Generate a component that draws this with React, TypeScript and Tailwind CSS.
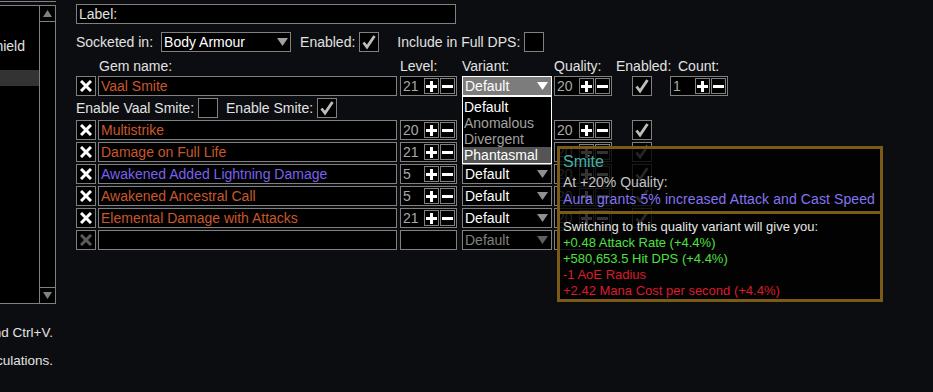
import React from 'react';

const ORANGE = 'text-[#c8582c]';
const PURPLE = 'text-[#7a60f0]';

function Tri({ color = '#a0a0a0', w = 11, h = 8 }: { color?: string; w?: number; h?: number }) {
  return (
    <svg width={w} height={h} viewBox={`0 0 ${w} ${h}`} className="shrink-0">
      <polygon points={`0,0 ${w},0 ${w / 2},${h}`} fill={color} />
    </svg>
  );
}

function Check() {
  return (
    <svg width="18" height="18" viewBox="0 0 18 18">
      <polyline points="3.5,9.5 7,14 14.5,3" fill="none" stroke="#bdbdbd" strokeWidth="2.8" strokeLinejoin="miter" />
    </svg>
  );
}

function CheckBox({ checked }: { checked?: boolean }) {
  return (
    <div className="w-[20px] h-[20px] shrink-0 border border-[#808080] bg-black flex items-center justify-center">
      {checked && <Check />}
    </div>
  );
}

function XButton({ disabled }: { disabled?: boolean }) {
  const c = disabled ? '#5c5c5c' : '#ffffff';
  return (
    <div className="w-[20px] h-[20px] shrink-0 border border-[#808080] bg-black flex items-center justify-center">
      <svg width="12" height="12" viewBox="0 0 12 12">
        <line x1="1" y1="1" x2="11" y2="11" stroke={c} strokeWidth="3" />
        <line x1="11" y1="1" x2="1" y2="11" stroke={c} strokeWidth="3" />
      </svg>
    </div>
  );
}

function PlusMinus() {
  return (
    <div className="flex gap-px">
      <div className="w-[15px] h-[16px] border border-[#808080] flex items-center justify-center">
        <svg width="11" height="11" viewBox="0 0 11 11">
          <rect x="0" y="4" width="11" height="3" fill="#fff" />
          <rect x="4" y="0" width="3" height="11" fill="#fff" />
        </svg>
      </div>
      <div className="w-[15px] h-[16px] border border-[#808080] flex items-center justify-center">
        <svg width="11" height="11" viewBox="0 0 11 11">
          <rect x="0" y="4" width="11" height="3" fill="#fff" />
        </svg>
      </div>
    </div>
  );
}

function Spinner({ value, width, empty }: { value?: string; width: string; empty?: boolean }) {
  return (
    <div className={`${width} h-[20px] shrink-0 border border-[#808080] bg-black flex items-center justify-between pl-[2px] pr-px`}>
      <span className="text-[#a8a8a8]">{value}</span>
      {!empty && <PlusMinus />}
    </div>
  );
}

function VariantSelect({ active, disabled }: { active?: boolean; disabled?: boolean }) {
  if (active) {
    return (
      <div className="relative w-[90px] h-[20px] shrink-0">
        <div className="w-full h-full border border-white bg-[#7c7c7c] flex items-center justify-between pl-[2px] pr-[3px]">
          <span className="text-white">Default</span>
          <Tri color="#ffffff" />
        </div>
        {/* open dropdown list */}
        <div className="absolute left-0 top-[20px] w-[90px] h-[68px] border border-white bg-black z-10 pt-[2px]">
          <div className="h-[16px] leading-[16px] px-px text-white">Default</div>
          <div className="h-[16px] leading-[16px] px-px text-[#a0a0a0]">Anomalous</div>
          <div className="h-[16px] leading-[16px] px-px text-[#a0a0a0]">Divergent</div>
          <div className="h-[16px] leading-[16px] px-px text-white bg-[#555555]">Phantasmal</div>
        </div>
      </div>
    );
  }
  return (
    <div className="w-[90px] h-[20px] shrink-0 border border-[#808080] bg-black flex items-center justify-between pl-[2px] pr-[3px]">
      <span className={disabled ? 'text-[#808080]' : 'text-white'}>Default</span>
      <Tri color={disabled ? '#606060' : '#909090'} />
    </div>
  );
}

type Gem = { name: string; color: string; level: string; quality: string; count?: string; active?: boolean };

const gems: Gem[] = [
  { name: 'Vaal Smite', color: ORANGE, level: '21', quality: '20', count: '1', active: true },
  { name: 'Multistrike', color: ORANGE, level: '20', quality: '20' },
  { name: 'Damage on Full Life', color: ORANGE, level: '21', quality: '20' },
  { name: 'Awakened Added Lightning Damage', color: PURPLE, level: '5', quality: '20' },
  { name: 'Awakened Ancestral Call', color: ORANGE, level: '5', quality: '20' },
  { name: 'Elemental Damage with Attacks', color: ORANGE, level: '21', quality: '20' },
];

function GemRow({ gem }: { gem: Gem }) {
  return (
    <div className="flex items-center h-[20px]">
      <XButton />
      <div className={`ml-[2px] w-[299px] h-[20px] border border-[#808080] bg-black flex items-center pl-[2px] ${gem.color}`}>
        {gem.name}
      </div>
      <div className="ml-[3px]">
        <Spinner value={gem.level} width="w-[57px]" />
      </div>
      <div className="ml-[5px]">
        <VariantSelect active={gem.active} />
      </div>
      <div className="ml-[2px]">
        <Spinner value={gem.quality} width="w-[58px]" />
      </div>
      <div className="ml-[20px]">
        <CheckBox checked />
      </div>
      {gem.count && (
        <div className="ml-[18px]">
          <Spinner value={gem.count} width="w-[58px]" />
        </div>
      )}
    </div>
  );
}

function Tooltip() {
  return (
    <div className="absolute left-[557px] top-[146px] w-[326px] border-[3px] border-[#7a5a14] bg-black/80 z-20">
      <div className="h-[62px] pl-[3px] pt-[3px]">
        <div className="text-[16px] leading-[20px] text-[#45b0a2]">Smite</div>
        <div className="mt-px leading-[18px] text-[#c4c4c4]">At +20% Quality:</div>
        <div className="leading-[16px] tracking-[0.1px] text-[#8274f2]">Aura grants 5% increased Attack and Cast Speed</div>
      </div>
      <div className="h-[3px] bg-[#7a5a14]" />
      <div className="h-[85px] pl-[3px] pt-[5px] text-[13px] leading-[16px]">
        <div className="text-[#e6e6e6]">Switching to this quality variant will give you:</div>
        <div className="text-[#4ee040]">+0.48 Attack Rate (+4.4%)</div>
        <div className="text-[#4ee040]">+580,653.5 Hit DPS (+4.4%)</div>
        <div className="text-[#dd1a2a]">-1 AoE Radius</div>
        <div className="text-[#dd1a2a]">+2.42 Mana Cost per second (+4.4%)</div>
      </div>
    </div>
  );
}

export default function App() {
  return (
    <div className="relative w-[933px] h-[392px] overflow-hidden bg-[#0c0d10] flex font-['Liberation_Sans',Arial,sans-serif] text-[14px] text-[#e2e2e2]">
      {/* left panel: gem group list, cut off on the left */}
      <div className="w-[56px] shrink-0 flex flex-col">
        <div className="mt-px h-px bg-[#808080]" />
        <div className="mt-[3px] h-[299px] border-y border-r border-[#808080] bg-black flex">
          <div className="w-[39px] shrink-0 overflow-hidden">
            <div className="h-[16px]" />
            <div className="h-[16px]" />
            <div className="h-[16px] leading-[16px] flex justify-end whitespace-nowrap pr-[14px]">Energy Shield</div>
            <div className="h-[16px]" />
            <div className="h-[16px] bg-[#333333]" />
          </div>
          <div className="w-[16px] border-l border-[#808080] flex flex-col justify-between">
            <div className="h-[16px] border-b border-[#808080] flex items-center justify-center">
              <svg width="9" height="7" viewBox="0 0 9 7"><polygon points="0,7 9,7 4.5,0" fill="#808080" /></svg>
            </div>
            <div className="h-[16px] border-t border-[#808080] flex items-center justify-center">
              <Tri color="#808080" w={9} h={7} />
            </div>
          </div>
        </div>
        <div className="mt-[21px] h-[16px] leading-[16px] text-[13.5px] flex justify-end whitespace-nowrap overflow-hidden pr-[3px]">
          Gems can be copied and pasted with Ctrl+C and Ctrl+V.
        </div>
        <div className="mt-[12px] h-[16px] leading-[16px] text-[13.5px] flex justify-end whitespace-nowrap overflow-hidden pr-[3px]">
          Disabled gems will not be used in calculations.
        </div>
      </div>

      {/* main socket group editor */}
      <div className="ml-[20px] flex flex-col">
        <div className="mt-[4px] w-[380px] h-[20px] border border-[#808080] bg-black flex items-center pl-[2px]">Label:</div>

        <div className="mt-[8px] h-[20px] flex items-center">
          <span>Socketed in:</span>
          <div className="ml-[8px] w-[130px] h-[20px] border border-[#808080] bg-black flex items-center justify-between pl-[2px] pr-[2px]">
            <span className="text-white">Body Armour</span>
            <Tri color="#a0a0a0" />
          </div>
          <span className="ml-[9px]">Enabled:</span>
          <div className="ml-[4px]"><CheckBox checked /></div>
          <span className="ml-[18px]">Include in Full DPS:</span>
          <div className="ml-[4px]"><CheckBox /></div>
        </div>

        <div className="mt-[6px] h-[16px] leading-[16px] flex">
          <div className="w-[22px]" />
          <div className="w-[302px] pl-px">Gem name:</div>
          <div className="w-[62px]">Level:</div>
          <div className="w-[92px]">Variant:</div>
          <div className="w-[62px]">Quality:</div>
          <div className="w-[62px]">Enabled:</div>
          <div>Count:</div>
        </div>

        <div className="mt-[2px] flex flex-col gap-[2px]">
          <GemRow gem={gems[0]} />
          <div className="h-[20px] flex items-center">
            <span>Enable Vaal Smite:</span>
            <div className="ml-[4px]"><CheckBox /></div>
            <span className="ml-[8px]">Enable Smite:</span>
            <div className="ml-[4px]"><CheckBox checked /></div>
          </div>
          {gems.slice(1).map((g) => (
            <GemRow key={g.name} gem={g} />
          ))}
          <div className="flex items-center h-[20px]">
            <XButton disabled />
            <div className="ml-[2px] w-[299px] h-[20px] border border-[#808080] bg-black" />
            <div className="ml-[3px]">
              <Spinner width="w-[57px]" empty />
            </div>
            <div className="ml-[5px]">
              <VariantSelect disabled />
            </div>
            <div className="ml-[2px]">
              <Spinner width="w-[58px]" empty />
            </div>
          </div>
        </div>
      </div>

      <Tooltip />
    </div>
  );
}
